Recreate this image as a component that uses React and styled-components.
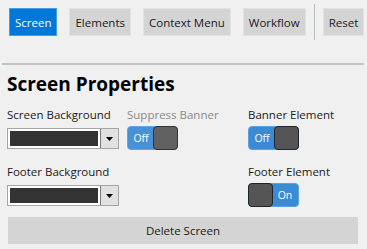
import React from 'react';
import styled, { createGlobalStyle } from 'styled-components';

const GlobalStyle = createGlobalStyle`
  html, body {
    margin: 0;
    padding: 0;
    background: #f0f0f0;
    font-family: "Open Sans", "Noto Sans", sans-serif;
    color: #1a1a1a;
  }
`;

const Page = styled.div`
  width: 367px;
  height: 249px;
  overflow: hidden;
`;

const Toolbar = styled.div`
  display: flex;
  align-items: center;
  gap: 12px;
  height: 36px;
  padding: 4px 0 0 9px;
`;

const TabButton = styled.button`
  flex-shrink: 0;
  white-space: nowrap;
  height: 28px;
  padding: 0 5px;
  border: 1px solid ${(p) => (p.active ? '#4a9be6' : '#e2e2e2')};
  background: ${(p) => (p.active ? '#0078d7' : '#d4d4d4')};
  color: ${(p) => (p.active ? '#ffffff' : '#1a1a1a')};
  font-family: inherit;
  font-size: 11.5px;
  cursor: pointer;
`;

const Separator = styled.div`
  flex-shrink: 0;
  width: 1px;
  height: 36px;
  background: #b9bec4;
  margin: 0 -4px;
`;

const Rule = styled.div`
  height: 2px;
  background: #c4c4c4;
  margin: 23px 3px 0 2px;
`;

const Heading = styled.h2`
  margin: 7px 7px 0;
  font-size: 19px;
  font-weight: 700;
  line-height: 24px;
  color: #000;
`;

const Grid = styled.div`
  display: grid;
  grid-template-columns: 120px 121px 1fr;
  row-gap: 14px;
  padding: 11px 0 0 7px;
`;

const Field = styled.div`
  display: flex;
  flex-direction: column;
  align-items: flex-start;
  gap: 3px;
`;

const Label = styled.span`
  font-size: 11.5px;
  line-height: 16px;
  white-space: nowrap;
  color: ${(p) => (p.disabled ? '#8a8a8a' : '#1a1a1a')};
`;

const ColorSelect = styled.div`
  display: flex;
  width: 112px;
  height: 21px;
  box-sizing: border-box;
  border: 1px solid #a6a6a6;
  background: #fff;
  margin-top: 2px;
`;

const Swatch = styled.div`
  flex: 1;
  margin: 2px;
  background: ${(p) => p.color};
`;

const Arrow = styled.div`
  width: 17px;
  display: flex;
  align-items: center;
  justify-content: center;
  background: #e1e1e1;
  border-left: 1px solid #7a7a7a;
`;

const Toggle = styled.div`
  display: flex;
  flex-direction: ${(p) => (p.on ? 'row-reverse' : 'row')};
  width: 51px;
  height: 24px;
  box-sizing: border-box;
  border: 1px solid #5aa0e2;
  border-radius: 4px;
  background: #3a8ad6;
  opacity: ${(p) => (p.disabled ? 0.92 : 1)};
`;

const ToggleText = styled.span`
  flex: 1;
  display: flex;
  align-items: center;
  justify-content: center;
  color: #fff;
  font-size: 10.5px;
`;

const Knob = styled.div`
  width: 25px;
  margin: -1px;
  box-sizing: border-box;
  border: 1.5px solid #1d2630;
  border-radius: 4px;
  background: #555555;
`;

const DeleteButton = styled.button`
  display: block;
  width: 350px;
  height: 27px;
  margin: 10px 0 0 8px;
  border: none;
  background: #d4d4d4;
  color: #1a1a1a;
  font-family: inherit;
  font-size: 11.5px;
`;

function ColorPicker({ color }) {
  return (
    <ColorSelect>
      <Swatch color={color} />
      <Arrow>
        <svg width="7" height="4" viewBox="0 0 7 4">
          <path d="M0 0h7L3.5 4z" fill="#000" />
        </svg>
      </Arrow>
    </ColorSelect>
  );
}

function Switch({ on, disabled }) {
  return (
    <Toggle on={on} disabled={disabled}>
      <ToggleText>{on ? 'On' : 'Off'}</ToggleText>
      <Knob />
    </Toggle>
  );
}

export default function App() {
  const tabs = ['Screen', 'Elements', 'Context Menu', 'Workflow'];
  return (
    <Page>
      <GlobalStyle />
      <Toolbar>
        {tabs.map((t) => (
          <TabButton key={t} active={t === 'Screen'}>{t}</TabButton>
        ))}
        <Separator />
        <TabButton>Reset</TabButton>
      </Toolbar>
      <Rule />
      <Heading>Screen Properties</Heading>
      <Grid>
        <Field>
          <Label>Screen Background</Label>
          <ColorPicker color="#333333" />
        </Field>
        <Field>
          <Label disabled>Suppress Banner</Label>
          <Switch disabled />
        </Field>
        <Field>
          <Label>Banner Element</Label>
          <Switch />
        </Field>
        <Field>
          <Label>Footer Background</Label>
          <ColorPicker color="#333333" />
        </Field>
        <div />
        <Field>
          <Label>Footer Element</Label>
          <Switch on />
        </Field>
      </Grid>
      <DeleteButton>Delete Screen</DeleteButton>
    </Page>
  );
}
